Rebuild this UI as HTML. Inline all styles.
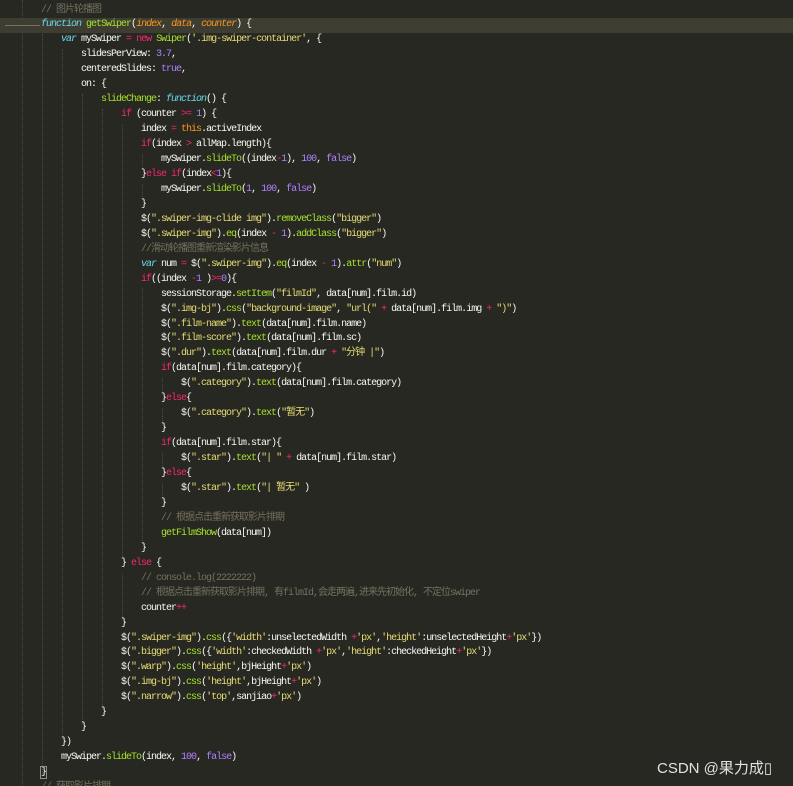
<!DOCTYPE html>
<html><head><meta charset="utf-8"><style>
html,body{margin:0;padding:0;background:#272822;width:793px;height:786px;overflow:hidden;position:relative}
#code{position:absolute;left:0;top:3.5px;width:793px;font-family:"Liberation Mono","Noto Sans CJK SC",monospace;font-size:10px;letter-spacing:-1.0px;color:#f8f8f2}
.l{height:14.96px;line-height:14.96px;white-space:pre;position:relative}
.hl{background:#3e3d32}
.k{color:#f92672}.f{color:#a6e22e}.s{color:#e6db74}.n{color:#ae81ff}.p{color:#fd971f;font-style:italic}
.t{color:#66d9ef;font-style:italic}.c{color:#75715e}.o{color:#fd971f}
.g{position:absolute;width:0;border-left:1px dotted #4a4a44}
#wm{position:absolute;left:657px;top:757px;font-family:"Liberation Sans","Noto Sans CJK SC",sans-serif;font-size:15px;color:#e2e2e2}
</style></head><body>
<div class="g" style="left:22px;top:0;height:786px"></div>
<div class="g" style="left:42px;top:34px;height:740px"></div>
<div class="g" style="left:62px;top:49px;height:690px"></div>
<div class="g" style="left:82px;top:94px;height:630px"></div>
<div class="g" style="left:102px;top:109px;height:600px"></div>
<div class="g" style="left:122px;top:124px;height:435px"></div>
<div class="g" style="left:122px;top:574px;height:45px"></div>
<div class="g" style="left:142px;top:154px;height:15px"></div>
<div class="g" style="left:142px;top:184px;height:15px"></div>
<div class="g" style="left:142px;top:288px;height:255px"></div>
<div class="g" style="left:162px;top:378px;height:15px"></div>
<div class="g" style="left:162px;top:408px;height:15px"></div>
<div class="g" style="left:162px;top:453px;height:15px"></div>
<div class="g" style="left:162px;top:483px;height:15px"></div>
<div id="code">
<div class="l" style="padding-left:41px"><span class="c">// 图片轮播图</span></div>
<div class="l hl" style="padding-left:41px"><span style="position:absolute;left:5px;top:7px;width:35px;border-top:1px solid #75715e"></span><span class="t">function</span> <span class="f">getSwiper</span>(<span class="p">index</span>, <span class="p">data</span>, <span class="p">counter</span>) {</div>
<div class="l" style="padding-left:61px"><span class="t">var</span> mySwiper <span class="k">=</span> <span class="k">new</span> <span class="f">Swiper</span>(<span class="s">'.img-swiper-container'</span>, {</div>
<div class="l" style="padding-left:81px">slidesPerView: <span class="n">3.7</span>,</div>
<div class="l" style="padding-left:81px">centeredSlides: <span class="n">true</span>,</div>
<div class="l" style="padding-left:81px">on: {</div>
<div class="l" style="padding-left:101px"><span class="f">slideChange</span>: <span class="t">function</span>() {</div>
<div class="l" style="padding-left:121px"><span class="k">if</span> (counter <span class="k">&gt;=</span> <span class="n">1</span>) {</div>
<div class="l" style="padding-left:141px">index <span class="k">=</span> <span class="o">this</span>.activeIndex</div>
<div class="l" style="padding-left:141px"><span class="k">if</span>(index <span class="k">&gt;</span> allMap.length){</div>
<div class="l" style="padding-left:161px">mySwiper.<span class="f">slideTo</span>((index<span class="k">-</span><span class="n">1</span>), <span class="n">100</span>, <span class="n">false</span>)</div>
<div class="l" style="padding-left:141px">}<span class="k">else</span> <span class="k">if</span>(index<span class="k">&lt;</span><span class="n">1</span>){</div>
<div class="l" style="padding-left:161px">mySwiper.<span class="f">slideTo</span>(<span class="n">1</span>, <span class="n">100</span>, <span class="n">false</span>)</div>
<div class="l" style="padding-left:141px">}</div>
<div class="l" style="padding-left:141px">$(<span class="s">".swiper-img-clide img"</span>).<span class="f">removeClass</span>(<span class="s">"bigger"</span>)</div>
<div class="l" style="padding-left:141px">$(<span class="s">".swiper-img"</span>).<span class="f">eq</span>(index <span class="k">-</span> <span class="n">1</span>).<span class="f">addClass</span>(<span class="s">"bigger"</span>)</div>
<div class="l" style="padding-left:141px"><span class="c">//滑动轮播图重新渲染影片信息</span></div>
<div class="l" style="padding-left:141px"><span class="t">var</span> num <span class="k">=</span> $(<span class="s">".swiper-img"</span>).<span class="f">eq</span>(index <span class="k">-</span> <span class="n">1</span>).<span class="f">attr</span>(<span class="s">"num"</span>)</div>
<div class="l" style="padding-left:141px"><span class="k">if</span>((index <span class="k">-</span><span class="n">1</span> )<span class="k">&gt;=</span><span class="n">0</span>){</div>
<div class="l" style="padding-left:161px">sessionStorage.<span class="f">setItem</span>(<span class="s">"filmId"</span>, data[num].film.id)</div>
<div class="l" style="padding-left:161px">$(<span class="s">".img-bj"</span>).<span class="f">css</span>(<span class="s">"background-image"</span>, <span class="s">"url("</span> <span class="k">+</span> data[num].film.img <span class="k">+</span> <span class="s">")"</span>)</div>
<div class="l" style="padding-left:161px">$(<span class="s">".film-name"</span>).<span class="f">text</span>(data[num].film.name)</div>
<div class="l" style="padding-left:161px">$(<span class="s">".film-score"</span>).<span class="f">text</span>(data[num].film.sc)</div>
<div class="l" style="padding-left:161px">$(<span class="s">".dur"</span>).<span class="f">text</span>(data[num].film.dur <span class="k">+</span> <span class="s">"分钟 |"</span>)</div>
<div class="l" style="padding-left:161px"><span class="k">if</span>(data[num].film.category){</div>
<div class="l" style="padding-left:181px">$(<span class="s">".category"</span>).<span class="f">text</span>(data[num].film.category)</div>
<div class="l" style="padding-left:161px">}<span class="k">else</span>{</div>
<div class="l" style="padding-left:181px">$(<span class="s">".category"</span>).<span class="f">text</span>(<span class="s">"暂无"</span>)</div>
<div class="l" style="padding-left:161px">}</div>
<div class="l" style="padding-left:161px"><span class="k">if</span>(data[num].film.star){</div>
<div class="l" style="padding-left:181px">$(<span class="s">".star"</span>).<span class="f">text</span>(<span class="s">"| "</span> <span class="k">+</span> data[num].film.star)</div>
<div class="l" style="padding-left:161px">}<span class="k">else</span>{</div>
<div class="l" style="padding-left:181px">$(<span class="s">".star"</span>).<span class="f">text</span>(<span class="s">"| 暂无"</span> )</div>
<div class="l" style="padding-left:161px">}</div>
<div class="l" style="padding-left:161px"><span class="c">// 根据点击重新获取影片排期</span></div>
<div class="l" style="padding-left:161px"><span class="f">getFilmShow</span>(data[num])</div>
<div class="l" style="padding-left:141px">}</div>
<div class="l" style="padding-left:121px">} <span class="k">else</span> {</div>
<div class="l" style="padding-left:141px"><span class="c">// console.log(2222222)</span></div>
<div class="l" style="padding-left:141px"><span class="c">// 根据点击重新获取影片排期, 有filmId,会走两遍,进来先初始化, 不定位swiper</span></div>
<div class="l" style="padding-left:141px">counter<span class="k">++</span></div>
<div class="l" style="padding-left:121px">}</div>
<div class="l" style="padding-left:121px">$(<span class="s">".swiper-img"</span>).<span class="f">css</span>({<span class="s">'width'</span>:unselectedWidth <span class="k">+</span><span class="s">'px'</span>,<span class="s">'height'</span>:unselectedHeight<span class="k">+</span><span class="s">'px'</span>})</div>
<div class="l" style="padding-left:121px">$(<span class="s">".bigger"</span>).<span class="f">css</span>({<span class="s">'width'</span>:checkedWidth <span class="k">+</span><span class="s">'px'</span>,<span class="s">'height'</span>:checkedHeight<span class="k">+</span><span class="s">'px'</span>})</div>
<div class="l" style="padding-left:121px">$(<span class="s">".warp"</span>).<span class="f">css</span>(<span class="s">'height'</span>,bjHeight<span class="k">+</span><span class="s">'px'</span>)</div>
<div class="l" style="padding-left:121px">$(<span class="s">".img-bj"</span>).<span class="f">css</span>(<span class="s">'height'</span>,bjHeight<span class="k">+</span><span class="s">'px'</span>)</div>
<div class="l" style="padding-left:121px">$(<span class="s">".narrow"</span>).<span class="f">css</span>(<span class="s">'top'</span>,sanjiao<span class="k">+</span><span class="s">'px'</span>)</div>
<div class="l" style="padding-left:101px">}</div>
<div class="l" style="padding-left:81px">}</div>
<div class="l" style="padding-left:61px">})</div>
<div class="l" style="padding-left:61px">mySwiper.<span class="f">slideTo</span>(index, <span class="n">100</span>, <span class="n">false</span>)</div>
<div class="l" style="padding-left:41px"><span style="outline:1px solid #8f8f8a">}</span></div>
<div class="l" style="padding-left:41px"><span class="c">// 获取影片排期</span></div>
</div>
<div id="wm">CSDN @果力成&#x25AF;</div>
</body></html>
